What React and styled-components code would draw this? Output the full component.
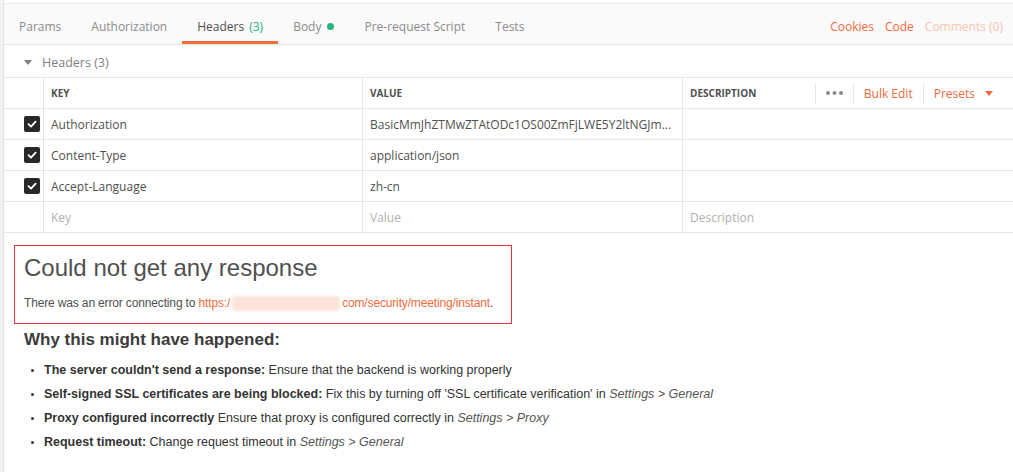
import styled, { createGlobalStyle } from 'styled-components';

const GlobalStyle = createGlobalStyle`
  body {
    margin: 0;
    background: #fff;
    font-family: "Open Sans", "Liberation Sans", sans-serif;
  }
`;

const tabs = [
  { label: 'Params' },
  { label: 'Authorization' },
  { label: 'Headers', count: '(3)', active: true },
  { label: 'Body', dot: true },
  { label: 'Pre-request Script' },
  { label: 'Tests' },
];

const headers = [
  { key: 'Authorization', value: 'BasicMmJhZTMwZTAtODc1OS00ZmFjLWE5Y2ltNGJm...' },
  { key: 'Content-Type', value: 'application/json' },
  { key: 'Accept-Language', value: 'zh-cn' },
];

const reasons = [
  {
    title: "The server couldn't send a response:",
    text: 'Ensure that the backend is working properly',
  },
  {
    title: 'Self-signed SSL certificates are being blocked:',
    text: "Fix this by turning off 'SSL certificate verification' in ",
    path: 'Settings > General',
  },
  {
    title: 'Proxy configured incorrectly',
    text: 'Ensure that proxy is configured correctly in ',
    path: 'Settings > Proxy',
  },
  {
    title: 'Request timeout:',
    text: 'Change request timeout in ',
    path: 'Settings > General',
  },
];

function Check() {
  return (
    <CheckBox>
      <svg width="10" height="10" viewBox="0 0 10 10">
        <path d="M1.5 5.2 L4 7.6 L8.6 2.6" fill="none" stroke="#fff" strokeWidth="1.8" strokeLinecap="round" strokeLinejoin="round" />
      </svg>
    </CheckBox>
  );
}

function Dots() {
  return (
    <svg width="17" height="4" viewBox="0 0 17 4">
      <circle cx="2" cy="2" r="2" fill="#8a8a8a" />
      <circle cx="8.5" cy="2" r="2" fill="#8a8a8a" />
      <circle cx="15" cy="2" r="2" fill="#8a8a8a" />
    </svg>
  );
}

export default function App() {
  return (
    <>
      <GlobalStyle />
      <Page>
        <Strip />
        <Main>
          <TabBar>
            {tabs.map(t => (
              <Tab key={t.label} $active={t.active}>
                {t.label}
                {t.count && <Count>{t.count}</Count>}
                {t.dot && <Dot />}
              </Tab>
            ))}
            <TabLinks>
              <Link>Cookies</Link>
              <Link>Code</Link>
              <Link $faded>Comments (0)</Link>
            </TabLinks>
          </TabBar>

          <Section>
            <Caret />
            Headers (3)
          </Section>

          <Table>
            <Cell />
            <HeadCell>Key</HeadCell>
            <HeadCell>Value</HeadCell>
            <HeadCell $last>
              Description
              <Actions>
                <Action><Dots /></Action>
                <Action>Bulk Edit</Action>
                <Action>
                  Presets
                  <SmallCaret />
                </Action>
              </Actions>
            </HeadCell>

            {headers.map(h => (
              <Row key={h.key}>
                <CheckCell><Check /></CheckCell>
                <Cell>{h.key}</Cell>
                <Cell>{h.value}</Cell>
                <Cell $last />
              </Row>
            ))}

            <Row>
              <Cell />
              <Cell $placeholder>Key</Cell>
              <Cell $placeholder>Value</Cell>
              <Cell $placeholder $last>Description</Cell>
            </Row>
          </Table>

          <Response>
            <ErrorBox>
              <ErrorTitle>Could not get any response</ErrorTitle>
              <ErrorText>
                There was an error connecting to <Url>https:/<Blur />com/security/meeting/instant</Url>.
              </ErrorText>
            </ErrorBox>

            <WhyTitle>Why this might have happened:</WhyTitle>
            <Reasons>
              {reasons.map(r => (
                <Reason key={r.title}>
                  <b>{r.title}</b> {r.text}
                  {r.path && <i>{r.path}</i>}
                </Reason>
              ))}
            </Reasons>
          </Response>
        </Main>
      </Page>
    </>
  );
}

const Page = styled.div`
  display: flex;
  width: 1013px;
  height: 472px;
  overflow: hidden;
`;

const Strip = styled.div`
  width: 3px;
  flex-shrink: 0;
  background: #f2f2f2;
  border-right: 1px solid #e4e4e4;
`;

const Main = styled.div`
  flex: 1;
  min-width: 0;
`;

const TabBar = styled.div`
  display: flex;
  height: 40px;
  margin-top: 3px;
  border-top: 1px solid #ececec;
  border-bottom: 1px solid #e6e6e6;
  background: #fafafa;
`;

const Tab = styled.div`
  display: flex;
  align-items: center;
  padding: 8px 15px 0;
  font-size: 12px;
  color: ${p => (p.$active ? '#505050' : '#8c8c8c')};
  border-bottom: 3px solid ${p => (p.$active ? '#f26b3a' : 'transparent')};
  white-space: nowrap;
`;

const Count = styled.span`
  margin-left: 5px;
  color: #26b47f;
`;

const Dot = styled.span`
  width: 7px;
  height: 7px;
  margin-left: 6px;
  border-radius: 50%;
  background: #26b47f;
`;

const TabLinks = styled.div`
  display: flex;
  align-items: center;
  gap: 11px;
  margin-left: auto;
  padding: 5px 10px 0 0;
`;

const Link = styled.span`
  font-size: 12px;
  color: ${p => (p.$faded ? '#f8c3ae' : '#f26b3a')};
`;

const Section = styled.div`
  display: flex;
  align-items: center;
  height: 32px;
  padding: 2px 0 0 20px;
  box-sizing: border-box;
  font-size: 12.5px;
  color: #808080;
`;

const Caret = styled.span`
  width: 0;
  height: 0;
  margin: 0 10px 0 0;
  border-left: 4px solid transparent;
  border-right: 4px solid transparent;
  border-top: 5px solid #808080;
`;

const Table = styled.div`
  display: grid;
  grid-template-columns: 40px 319px 320px 1fr;
  border-top: 1px solid #e6e6e6;
`;

const Row = styled.div`
  display: contents;
`;

const Cell = styled.div`
  display: flex;
  align-items: center;
  height: 30px;
  padding-left: 7px;
  border-bottom: 1px solid #e6e6e6;
  border-right: ${p => (p.$last ? 'none' : '1px solid #e6e6e6')};
  font-size: 12px;
  color: ${p => (p.$placeholder ? '#b0b0b0' : '#505050')};
  white-space: nowrap;
  overflow: hidden;
`;

const HeadCell = styled(Cell)`
  font-size: 10px;
  font-weight: 700;
  text-transform: uppercase;
  color: #505050;
`;

const CheckCell = styled(Cell)`
  padding-left: 20px;
`;

const CheckBox = styled.span`
  display: flex;
  align-items: center;
  justify-content: center;
  width: 16px;
  height: 16px;
  border-radius: 2px;
  background: #282828;
`;

const Actions = styled.div`
  display: flex;
  align-items: center;
  height: 21px;
  margin-left: auto;
  padding-right: 10px;
  text-transform: none;
  font-weight: 400;
`;

const Action = styled.span`
  display: flex;
  align-items: center;
  height: 100%;
  padding: 0 10px;
  border-left: 1px solid #e6e6e6;
  font-size: 12px;
  color: #f26b3a;
`;

const SmallCaret = styled.span`
  width: 0;
  height: 0;
  margin-left: 10px;
  border-left: 4px solid transparent;
  border-right: 4px solid transparent;
  border-top: 5px solid #f26b3a;
`;

const Response = styled.div`
  padding: 12px 10px 0;
  font-family: "Liberation Sans", Arial, sans-serif;
`;

const ErrorBox = styled.div`
  width: 478px;
  padding: 8px 9px 12px;
  border: 1px solid #e8343a;
`;

const ErrorTitle = styled.div`
  font-size: 24px;
  line-height: 28px;
  color: #505050;
`;

const ErrorText = styled.div`
  margin-top: 14px;
  font-size: 12px;
  letter-spacing: -0.15px;
  white-space: nowrap;
  color: #505050;
`;

const Url = styled.span`
  color: #f26b3a;
`;

const Blur = styled.span`
  display: inline-block;
  width: 108px;
  height: 15px;
  margin: 0 2px;
  vertical-align: -4px;
  background: #fde3d9;
  border-radius: 4px;
  filter: blur(1.5px);
`;

const WhyTitle = styled.div`
  margin: 6px 0 0 10px;
  font-size: 17px;
  font-weight: 700;
  color: #3c3c3c;
`;

const Reasons = styled.ul`
  margin: 8px 0 0 10px;
  padding: 0 0 0 20px;
  list-style: disc;
  font-size: 12.5px;
  color: #333;
`;

const Reason = styled.li`
  line-height: 24px;

  &::marker {
    font-size: 10px;
  }

  b {
    color: #333;
  }

  i {
    color: #555;
  }
`;
